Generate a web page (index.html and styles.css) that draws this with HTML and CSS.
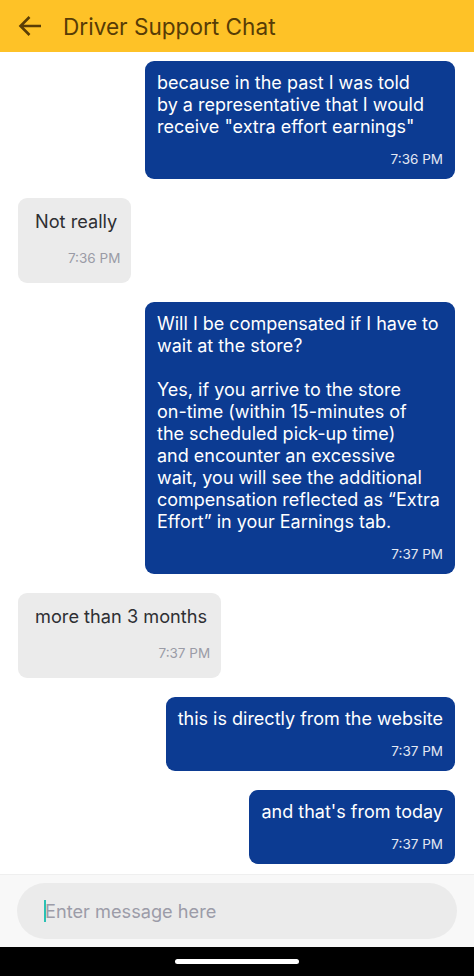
FILE: index.html
```html
<!DOCTYPE html>
<html lang="en">
<head>
<meta charset="utf-8">
<title>Driver Support Chat</title>
<link rel="stylesheet" href="styles.css">
</head>
<body>
<div class="app">
  <header class="topbar">
    <svg class="back" width="26" height="24" viewBox="0 0 26 24" aria-hidden="true">
      <path d="M24 12H3.5M12.5 3L3.5 12L12.5 21" fill="none" stroke="#5a3d05" stroke-width="2.6" stroke-linecap="butt" stroke-linejoin="miter"/>
    </svg>
    <h1 class="title">Driver Support Chat</h1>
  </header>
  <main class="messages">
    <div class="msg out wide">
      <p class="text">because in the past I was told<br>by a representative that I would<br>receive "extra effort earnings"</p>
      <div class="time">7:36 PM</div>
    </div>
    <div class="msg in">
      <p class="text">Not really</p>
      <div class="time">7:36 PM</div>
    </div>
    <div class="msg out wide">
      <p class="text">Will I be compensated if I have to<br>wait at the store?<br><br>Yes, if you arrive to the store<br>on-time (within 15-minutes of<br>the scheduled pick-up time)<br>and encounter an excessive<br>wait, you will see the additional<br>compensation reflected as “Extra<br>Effort” in your Earnings tab.</p>
      <div class="time">7:37 PM</div>
    </div>
    <div class="msg in">
      <p class="text">more than 3 months</p>
      <div class="time">7:37 PM</div>
    </div>
    <div class="msg out">
      <p class="text">this is directly from the website</p>
      <div class="time">7:37 PM</div>
    </div>
    <div class="msg out">
      <p class="text">and that's from today</p>
      <div class="time">7:37 PM</div>
    </div>
  </main>
  <footer class="composer">
    <div class="input">
      <span class="caret"></span>
      <span class="placeholder">Enter message here</span>
    </div>
  </footer>
  <div class="navbar"><span class="handle"></span></div>
</div>
</body>
</html>
```

FILE: styles.css
```css
* { box-sizing: border-box; }
html, body { margin: 0; padding: 0; background: #ffffff; }
body { font-family: Inter, "Noto Sans", "Liberation Sans", sans-serif; }

.app {
  width: 474px;
  height: 976px;
  display: flex;
  flex-direction: column;
  overflow: hidden;
}

.topbar {
  height: 52px;
  flex: none;
  background: #fec227;
  display: flex;
  align-items: center;
  padding-left: 17px;
  gap: 20px;
}
.back { display: block; flex: none; }
.title {
  margin: 0;
  font-size: 22.6px;
  font-weight: 400;
  color: #573c06;
}

.messages {
  flex: 1;
  overflow: hidden;
  display: flex;
  flex-direction: column;
  gap: 19px;
  padding: 9px 19px 0 18px;
}

.msg {
  max-width: 310px;
  border-radius: 9px;
}
.msg.wide { width: 310px; }
.msg .text {
  margin: 0;
  font-size: 18px;
  line-height: 22px;
  white-space: nowrap;
}
.msg .time {
  font-size: 13.5px;
  line-height: 16px;
  text-align: right;
}

.msg.out {
  align-self: flex-end;
  background: #0c3b92;
  color: #ffffff;
  padding: 11px 12px 12px 12px;
}
.msg.out .time { margin-top: 13px; color: #e3e8f3; }

.msg.in {
  align-self: flex-start;
  background: #ebebeb;
  color: #2e2f33;
  padding: 12px 11px 17px 17px;
}
.msg.in .text { margin-right: 3px; font-size: 18.2px; }
.msg.in .time { margin-top: 18px; color: #9a9ba6; }

.composer {
  flex: none;
  height: 73px;
  background: #f8f8f8;
  border-top: 1px solid #efefef;
  padding: 8px 17px 0 17px;
}
.input {
  height: 56px;
  border-radius: 28px;
  background: #ebebeb;
  display: flex;
  align-items: center;
  padding-left: 27px;
}
.caret {
  width: 2px;
  height: 22px;
  background: #2ac1b4;
  flex: none;
  margin-right: -1px;
}
.placeholder {
  font-size: 18.2px;
  color: #9c9ca8;
}

.navbar {
  flex: none;
  height: 29px;
  background: #000000;
  display: flex;
  align-items: center;
  justify-content: center;
}
.handle {
  width: 124px;
  height: 5px;
  border-radius: 3px;
  background: #ffffff;
}
```
